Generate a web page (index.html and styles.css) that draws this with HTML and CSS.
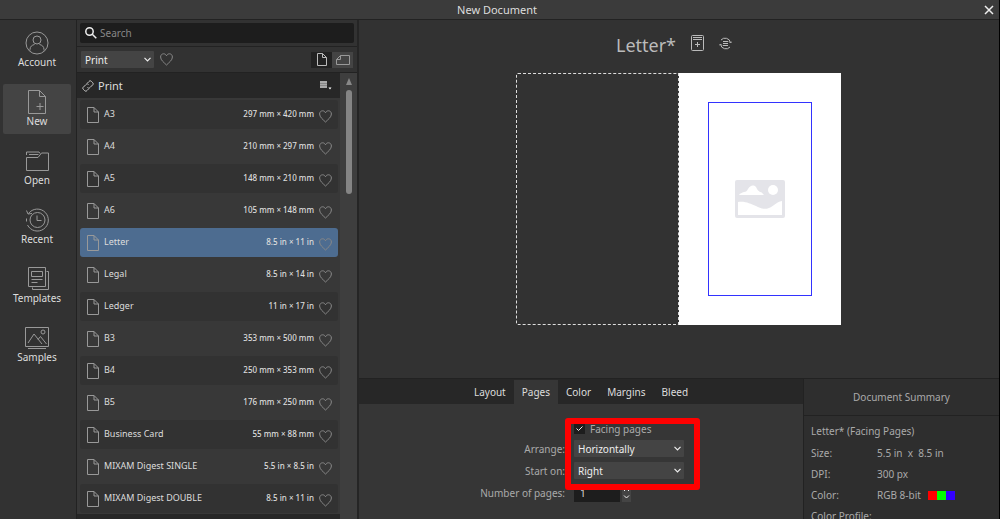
FILE: index.html
```
<!DOCTYPE html>
<html lang="en">
<head>
    <meta charset="UTF-8">
    <meta name="viewport" content="width=device-width, initial-scale=1.0">
    <title>New Document</title>
    <link rel="stylesheet" href="styles.css">
</head>
<body>
    <svg class="symbols" aria-hidden="true">
        <symbol id="icon-page" viewBox="0 0 12 16">
            <path d="M0.5 0.5h6.5l4.5 4.5v10.5h-11zM7 0.5v4.5h4.5" />
        </symbol>
        <symbol id="icon-heart" viewBox="0 0 13 13">
            <path d="M6.5 12C4 9.5 0.6 7.2 0.6 4 0.6 2 2 0.8 3.6 0.8 5 0.8 6 1.6 6.5 2.8 7 1.6 8 0.8 9.4 0.8 11 0.8 12.4 2 12.4 4 12.4 7.2 9 9.5 6.5 12z" />
        </symbol>
    </svg>

    <header class="titlebar">
        <h1>New Document</h1>
        <button class="close" aria-label="Close">
            <svg width="10" height="10" viewBox="0 0 10 10"><path d="M1 1l8 8M9 1l-8 8" /></svg>
        </button>
    </header>

    <main class="dialog">
        <nav class="sidebar">
            <button>
                <svg width="24" height="24" viewBox="0 0 24 24"><circle cx="12" cy="12" r="11" /><circle cx="12" cy="9" r="4" /><path d="M5 19.500v-1c0-3 2-4.500 4.500-5M19 19.500v-1c0-3-2-4.500-4.500-5" /></svg>
                Account
            </button>
            <button class="active">
                <svg width="24" height="24" viewBox="0 0 24 24"><path d="M3.500 0.500h11l6 6v17h-17zM14.500 0.500v6h6M15 13v7M11.500 16.500h7" /></svg>
                New
            </button>
            <button>
                <svg width="24" height="24" viewBox="0 0 24 24"><path d="M1.500 8.500h11.500l3.500-4.500h7v17.500h-22zM1.500 6V3h12.500l1 1.500M4 5.500h9.500" /></svg>
                Open
            </button>
            <button>
                <svg width="24" height="24" viewBox="0 0 24 24"><circle cx="12.500" cy="12" r="7.500" /><path d="M3.500 5.500A11 11 0 1 1 2.500 17M1.500 13.500v-3M1.500 2.500l1.500 3.500L7 5.500M12 7.500v5h4.500" /></svg>
                Recent
            </button>
            <button>
                <svg width="24" height="24" viewBox="0 0 24 24"><path d="M3.500 0.500h17v19h-17zM6.500 4.500h11v5h-11zM6.500 12.500h11M6.500 15.500h6M21.500 4.500h2v18h-16v-2" /></svg>
                Templates
            </button>
            <button>
                <svg width="24" height="24" viewBox="0 0 24 24"><path d="M0.500 1.500h23v19h-23zM3 17l6-9 8 10M13 13.500l2.500-3 6 7.500M3 22.500h18" /><circle cx="18" cy="6" r="2" /></svg>
                Samples
            </button>
        </nav>

        <section class="presets">
            <div class="search">
                <label for="search" aria-label="Search">
                    <svg width="12" height="12" viewBox="0 0 12 12"><circle cx="4.500" cy="4.500" r="3.700" /><path d="M7.300 7.300l4 4" /></svg>
                </label>
                <input type="search" id="search" placeholder="Search">
            </div>
            <div class="filter">
                <select class="dropdown" aria-label="Category">
                    <option>Print</option>
                </select>
                <button class="heart" aria-label="Favorites"><svg><use href="#icon-heart" /></svg></button>
                <div class="orientation">
                    <button class="portrait" aria-label="Portrait"><svg width="10" height="13" viewBox="0 0 10 13"><path d="M0.500 0.500h5l4 4v8h-9zM5.500 0.500v4h4" /></svg></button>
                    <button class="landscape" aria-label="Landscape"><svg width="14" height="11" viewBox="0 0 14 11"><path d="M4.500 1.500h9v9h-13v-5zM4.500 1.500v4h-4" /></svg></button>
                </div>
            </div>
            <div class="list-area">
                <div class="list">
                    <div class="list-header">
                        <svg width="12" height="12" viewBox="0 0 12 12"><path d="M5.500 3l1.500-1.500a1.500 1.500 0 0 1 2.500 0l1 1a1.500 1.500 0 0 1 0 2.500L8 7.500a1.500 1.500 0 0 1-2.500 0M6.500 9L5 10.500a1.500 1.500 0 0 1-2.500 0l-1-1a1.500 1.500 0 0 1 0-2.500L4 4.500a1.500 1.500 0 0 1 2.500 0" /></svg>
                        <h2>Print</h2>
                        <button aria-label="List options">
                            <svg width="12" height="9" viewBox="0 0 12 9"><path d="M0 0h7v7H0z" fill="#aaa" /><path d="M0 2.500h7M0 4.500h7" stroke="#888" /><path d="M8.500 6.500h3L10 8.500z" fill="#fff" /></svg>
                        </button>
                    </div>
                    <ul id="preset-list"></ul>
                    <div class="list-footer"></div>
                </div>
                <div class="scrollbar">
                    <svg width="6" height="7" viewBox="0 0 6 7"><path d="M3 0l3 7H0z" /></svg>
                    <div class="thumb"></div>
                </div>
            </div>
        </section>

        <section class="document">
            <div class="preview">
                <div class="preview-title">
                    <h2>Letter*</h2>
                    <button aria-label="Add preset">
                        <svg width="13" height="16" viewBox="0 0 13 16"><rect x="0.500" y="0.500" width="12" height="15" rx="1" /><path d="M2 2.500h9M2 4.500h9M6.500 7v5M4 9.500h5" /></svg>
                    </button>
                    <button aria-label="Change orientation">
                        <svg width="13" height="13" viewBox="0 0 13 13"><path d="M2 3a5.500 5.500 0 0 1 9.500 2.500M11 10a5.500 5.500 0 0 1-9.500-2.500M4 4.500h5M4 6.500h5M4 8.500h5M10 4.500l1.500 1.500L13 4.500M0 8.500L1.500 7 3 8.500" /></svg>
                    </button>
                </div>
                <div class="spread">
                    <div class="page empty"></div>
                    <div class="page">
                        <div class="margins">
                            <svg width="50" height="38" viewBox="0 0 50 38"><rect width="50" height="38" rx="2" fill="#e4e4e9" /><path d="M4 15c1-2 3-2 5-3 2 0 3-1 4-3 2-3 5-5 8-2 1 2 2 4 4 5 2 0 3 2 4 3z" /><circle cx="38" cy="10" r="5" /><path d="M3 22c8-1 12 2 18 4 4 2 8 4 13 2 5-2 7-6 13-7v14H3z" /></svg>
                        </div>
                    </div>
                </div>
            </div>

            <div class="settings">
                <div class="options">
                    <div class="tabs" role="tablist">
                        <button role="tab">Layout</button>
                        <button role="tab" class="active" aria-selected="true">Pages</button>
                        <button role="tab">Color</button>
                        <button role="tab">Margins</button>
                        <button role="tab">Bleed</button>
                    </div>
                    <form class="fields">
                        <div class="check">
                            <input type="checkbox" id="facing" checked>
                            <label for="facing">Facing pages</label>
                        </div>
                        <label for="arrange">Arrange:</label>
                        <select class="dropdown" id="arrange">
                            <option>Horizontally</option>
                            <option>Vertically</option>
                        </select>
                        <label for="start">Start on:</label>
                        <select class="dropdown" id="start">
                            <option>Right</option>
                            <option>Left</option>
                        </select>
                        <label for="count">Number of pages:</label>
                        <div class="stepper">
                            <input type="text" id="count" value="1">
                            <button type="button" aria-label="Change number of pages">
                                <svg width="7" height="13" viewBox="0 0 7 13"><path d="M1 4l2.500-2.500L6 4M1 8.500L3.500 11 6 8.500" /></svg>
                            </button>
                        </div>
                        <div class="highlight"></div>
                    </form>
                </div>

                <aside class="summary">
                    <h2>Document Summary</h2>
                    <p>Letter* (Facing Pages)</p>
                    <dl>
                        <dt>Size:</dt>
                        <dd>5.5 in &nbsp;x&nbsp; 8.5 in</dd>
                        <dt>DPI:</dt>
                        <dd>300 px</dd>
                        <dt>Color:</dt>
                        <dd>RGB 8-bit <span class="swatches"><i class="red"></i><i class="green"></i><i class="blue"></i></span></dd>
                        <dt>Color Profile:</dt>
                        <dd></dd>
                    </dl>
                </aside>
            </div>
        </section>
    </main>

    <script>
        const presets = [
            ["A3", "297 mm × 420 mm"],
            ["A4", "210 mm × 297 mm"],
            ["A5", "148 mm × 210 mm"],
            ["A6", "105 mm × 148 mm"],
            ["Letter", "8.5 in × 11 in"],
            ["Legal", "8.5 in × 14 in"],
            ["Ledger", "11 in × 17 in"],
            ["B3", "353 mm × 500 mm"],
            ["B4", "250 mm × 353 mm"],
            ["B5", "176 mm × 250 mm"],
            ["Business Card", "55 mm × 88 mm"],
            ["MIXAM Digest SINGLE", "5.5 in × 8.5 in"],
            ["MIXAM Digest DOUBLE", "8.5 in × 11 in"]
        ];

        const presetList = document.getElementById("preset-list");

        presets.forEach(([name, size]) => {
            const item = document.createElement("li");
            item.innerHTML = `
                <button class="preset">
                    <svg><use href="#icon-page" /></svg>
                    <span class="name">${name}</span>
                    <span class="size">${size}</span>
                </button>
                <button class="heart" aria-label="Favorite ${name}"><svg><use href="#icon-heart" /></svg></button>`;
            if (name === "Letter") {
                item.classList.add("selected");
            }
            item.querySelector(".preset").addEventListener("click", () => {
                document.querySelector(".selected").classList.remove("selected");
                item.classList.add("selected");
            });
            presetList.appendChild(item);
        });
    </script>
</body>
</html>
```
FILE: styles.css
```
* {
    box-sizing: border-box;
    margin: 0;
    padding: 0;
}

body {
    display: flex;
    flex-direction: column;
    height: 100vh;
    overflow: hidden;
    border-right: 1px solid #000;
    background-color: #323232;
    color: #ddd;
    font-family: "Noto Sans", "Open Sans", sans-serif;
    font-size: 10px;
    line-height: 14px;
}

button, input, select {
    border: none;
    background: none;
    color: inherit;
    font: inherit;
}

h1, h2 {
    font-size: 11px;
    font-weight: normal;
}

svg {
    display: block;
    flex: none;
    fill: none;
    stroke: #999;
}

.symbols {
    position: absolute;
    width: 0;
    height: 0;
}

.titlebar {
    display: grid;
    grid-template-columns: 1fr auto 1fr;
    align-items: center;
    height: 20px;
    flex: none;
    padding-right: 5px;
    background-color: #3b3b3b;
    border-bottom: 1px solid #222;
}

.titlebar h1 {
    grid-column: 2;
}

.close {
    justify-self: end;
}

.close svg {
    stroke: #eee;
    stroke-width: 1.5;
}

.dialog {
    display: flex;
    flex: 1;
    min-height: 0;
}

/* Sidebar */
.sidebar {
    display: flex;
    flex-direction: column;
    gap: 9px;
    width: 77px;
    flex: none;
    padding: 5px 5px 0 3px;
    border-right: 1px solid #222;
}

.sidebar button {
    display: flex;
    flex-direction: column;
    align-items: center;
    height: 50px;
    padding-top: 6px;
    border-radius: 2px;
}

.sidebar .active {
    background-color: #444;
}

/* Presets */
.presets {
    display: flex;
    flex-direction: column;
    width: 282px;
    flex: none;
    border-right: 2px solid #252525;
    background-color: #323232;
}

.search {
    display: flex;
    align-items: center;
    gap: 3px;
    height: 20px;
    flex: none;
    margin: 3px;
    padding-left: 5px;
    background-color: #1d1d1d;
    border-radius: 2px;
}

.search svg {
    stroke: #eee;
    stroke-width: 1.5;
}

.search input {
    flex: 1;
    outline: none;
}

.search input::placeholder {
    color: #888;
}

.filter {
    display: flex;
    align-items: center;
    gap: 6px;
    height: 27px;
    flex: none;
    padding: 0 4px;
    border-top: 1px solid #222;
    border-bottom: 1px solid #222;
}

.dropdown {
    appearance: none;
    width: 73px;
    height: 17px;
    padding: 0 4px;
    border-radius: 1px;
    color: #eee;
    background: #444 url("data:image/svg+xml,%3Csvg xmlns='http://www.w3.org/2000/svg' width='7' height='5' viewBox='0 0 7 5'%3E%3Cpath d='M.5 .8l3 3 3-3' fill='none' stroke='%23eee' stroke-width='1.200'/%3E%3C/svg%3E") no-repeat right 3px center;
}

.heart svg {
    width: 13px;
    height: 13px;
    stroke: #888;
}

.orientation {
    display: flex;
    margin-left: auto;
}

.orientation button {
    display: flex;
    align-items: center;
    justify-content: center;
    width: 21px;
    height: 16px;
    background-color: #444;
}

.orientation .portrait {
    background-color: #222;
}

.portrait svg {
    stroke: #bbb;
}

.list-area {
    display: flex;
    flex: 1;
    min-height: 0;
}

.list {
    display: flex;
    flex-direction: column;
    flex: 1;
    background-color: #383838;
}

.list-header {
    display: flex;
    align-items: center;
    gap: 4px;
    height: 25px;
    flex: none;
    padding: 0 8px 0 5px;
    background-color: #272727;
}

.list-header svg {
    stroke: #ccc;
}

.list-header button {
    margin-left: auto;
}

.list-header button svg {
    stroke: none;
}

.list ul {
    display: flex;
    flex-direction: column;
    gap: 3px;
    padding: 2px 2px 0 3px;
    list-style: none;
}

.list li {
    display: flex;
    align-items: center;
    height: 29px;
    padding: 0 6px 0 7px;
    border-radius: 3px;
}

.list li:nth-child(odd) {
    background-color: #323232;
}

.list li.selected {
    background-color: #4d6c90;
}

.preset {
    display: flex;
    align-items: center;
    flex: 1;
    gap: 5px;
}

.preset svg {
    width: 12px;
    height: 16px;
}

.name {
    padding-bottom: 1px;
    font-size: 9px;
}

.size {
    margin-left: auto;
    padding-bottom: 1px;
    font-size: 8px;
    font-weight: 500;
}

.list .heart {
    padding: 4px 0 0 5px;
}

.list-footer {
    flex: 1;
    margin-top: 1px;
    background-color: #272727;
}

.scrollbar {
    display: flex;
    flex-direction: column;
    align-items: center;
    gap: 5px;
    width: 17px;
    padding-top: 5px;
    background-color: #3e3e3e;
}

.scrollbar svg {
    fill: #888;
    stroke: none;
}

.thumb {
    width: 6px;
    height: 104px;
    border-radius: 3px;
    background-color: #858585;
}

/* Preview */
.document {
    display: flex;
    flex-direction: column;
    flex: 1;
    min-width: 0;
}

.preview {
    display: flex;
    flex-direction: column;
    align-items: center;
    flex: 1;
    padding: 10px 2px 0 0;
}

.preview-title {
    display: flex;
    gap: 15px;
    padding-bottom: 13px;
    padding-right: 8px;
    color: #bbb;
}

.preview-title h2 {
    font-size: 18px;
    line-height: 30px;
}

.preview-title button {
    height: 26px;
}

.preview-title svg {
    stroke: #bbb;
}

.spread {
    display: flex;
}

.page {
    width: 162px;
    height: 252px;
    padding: 29px;
    background-color: #fff;
}

.page.empty {
    width: 163px;
    border: 1px dashed #ddd;
    border-radius: 2px 0 0 2px;
    background: none;
}

.margins {
    display: flex;
    align-items: center;
    justify-content: center;
    height: 100%;
    border: 1px solid #33f;
}

.margins svg {
    fill: #fff;
    stroke: none;
}

/* Settings */
.settings {
    display: flex;
    height: 141px;
    border-top: 1px solid #222;
}

.options {
    flex: 1;
    background-color: #363636;
}

.tabs {
    display: flex;
    justify-content: center;
    height: 25px;
    padding-top: 1px;
    background-color: #272727;
}

.tabs button {
    padding: 0 8px;
}

.tabs .active {
    background-color: #363636;
}

.fields {
    position: relative;
    display: grid;
    grid-template-columns: 206px 110px;
    gap: 5px 9px;
    align-items: center;
    padding-top: 18px;
    color: #aaa;
}

.fields > label {
    text-align: right;
}

.fields .dropdown {
    width: 110px;
}

.check {
    grid-column: 2;
    display: flex;
    align-items: center;
    gap: 5px;
    height: 13px;
}

.check input {
    appearance: none;
    width: 11px;
    height: 11px;
    background: #1d1d1d url("data:image/svg+xml,%3Csvg xmlns='http://www.w3.org/2000/svg' width='7' height='7' viewBox='0 0 7 7'%3E%3Cpath d='M.5 3.500l2 2 4-4' fill='none' stroke='%23eee'/%3E%3C/svg%3E") no-repeat center;
}

.stepper {
    display: flex;
    gap: 2px;
}

.stepper input {
    width: 46px;
    height: 18px;
    padding-left: 6px;
    background-color: #1d1d1d;
    color: #ddd;
}

.stepper button {
    padding: 2px 1px;
    background-color: #444;
}

.stepper svg {
    stroke: #eee;
}

/* Frame drawn over the facing pages controls */
.highlight {
    position: absolute;
    top: 14px;
    left: 206px;
    width: 135px;
    height: 72px;
    border: 6px solid #f00;
    border-radius: 3px;
    pointer-events: none;
}

.summary {
    width: 196px;
    flex: none;
    overflow: hidden;
    border-left: 1px solid #222;
    background-color: #2e2e2e;
    color: #aaa;
}

.summary h2 {
    padding: 11px 0;
    border-bottom: 1px solid #222;
    font-size: 10px;
    text-align: center;
}

.summary p {
    padding: 8px 7px 0;
}

.summary dl {
    display: grid;
    grid-template-columns: 66px 1fr;
    gap: 7px 0;
    padding: 8px 0 0 7px;
}

.summary dt {
    white-space: nowrap;
}

.summary dd {
    display: flex;
    align-items: center;
    gap: 7px;
}

.swatches {
    display: flex;
}

.swatches i {
    width: 9px;
    height: 9px;
}

.red {
    background-color: #f00;
}

.green {
    background-color: #0f0;
}

.blue {
    background-color: #30f;
}
```
